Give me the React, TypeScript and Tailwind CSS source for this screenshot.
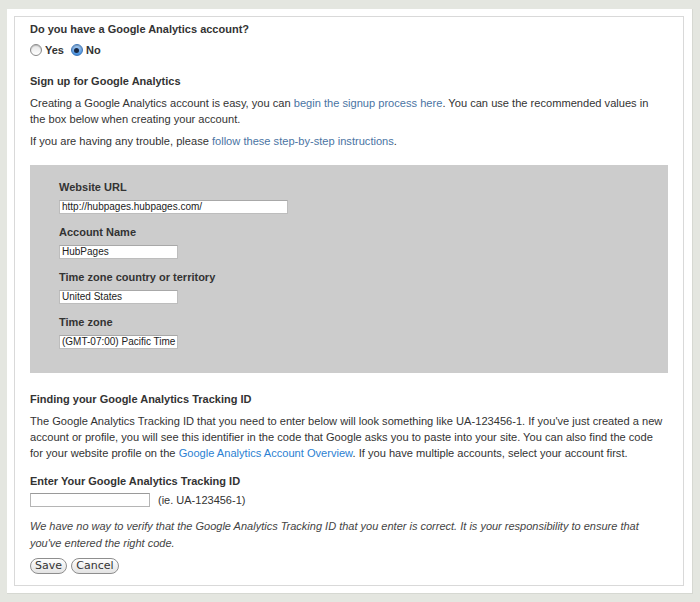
import React from 'react'

const sans = { fontFamily: '"Liberation Sans", Arial, Helvetica, sans-serif' }

function Radio({ checked }: { checked?: boolean }) {
  if (checked) {
    return (
      <span className="inline-flex items-center justify-center w-[12px] h-[12px] rounded-full border border-[#3d76b8] bg-gradient-to-b from-[#a9cdf3] to-[#3f8ee0] shadow-[inset_0_1px_1px_rgba(0,0,0,0.25)]">
        <span className="w-[5px] h-[5px] rounded-full bg-[#1a2a44]" />
      </span>
    )
  }
  return (
    <span className="inline-block w-[12px] h-[12px] rounded-full border border-[#8a8a8a] bg-gradient-to-b from-[#e6e6e6] to-white shadow-[inset_0_1px_1px_rgba(0,0,0,0.2)]" />
  )
}

function Field({ label, value, width, first }: { label: string; value: string; width: string; first?: boolean }) {
  return (
    <div className={first ? '' : 'mt-[10px]'}>
      <div className="font-bold leading-4">{label}</div>
      <div className={`mt-[5px] h-[14px] ${width} bg-white border border-[#bdbdbd] border-t-[#a8a8a8] text-[10px] leading-[12px] text-[#222] pl-[2px] overflow-hidden whitespace-nowrap`}>
        {value}
      </div>
    </div>
  )
}

function PillButton({ children, width }: { children: React.ReactNode; width: string }) {
  return (
    <button
      type="button"
      className={`h-[16px] ${width} rounded-full border border-[#8e8e8e] bg-gradient-to-b from-white to-[#e3e3e3] text-[11px] leading-[14px] text-[#333] flex items-center justify-center`}
      style={{ fontFamily: '"DejaVu Sans", Verdana, sans-serif' }}
    >
      {children}
    </button>
  )
}

export default function App() {
  return (
    <div className="bg-[#e4e6e0] h-[602px] w-[700px] pt-[9px] pl-[7px]" style={sans}>
      <div className="bg-white w-[686px] h-[585px] pt-[7px] pl-[7px] border-r border-b border-[#d6d8d2]">
        <div className="w-[670px] h-[570px] border border-[#d9d9d9] px-[15px] pt-[4px] text-[11px] text-[#333]">
          <div className="font-bold leading-4">Do you have a Google Analytics account?</div>
          <div className="mt-[5px] flex items-center h-4 font-bold">
            <Radio />
            <span className="ml-[3px]">Yes</span>
            <span className="ml-[7px] flex items-center">
              <Radio checked />
            </span>
            <span className="ml-[3px]">No</span>
          </div>

          <div className="mt-[15px] font-bold leading-4">Sign up for Google Analytics</div>
          <p className="mt-[6px] leading-4 text-[11.1px] w-[630px]">
            Creating a Google Analytics account is easy, you can{' '}
            <a className="text-[#4a74a3]">begin the signup process here</a>. You can use the recommended values in the box below when creating your account.
          </p>
          <p className="mt-[6px] leading-4 text-[11.1px]">
            If you are having any trouble, please <a className="text-[#4a74a3]">follow these step-by-step instructions</a>.
          </p>

          <div className="mt-[16px] bg-[#cccccc] w-[638px] h-[208px] pl-[29px] pt-[14px]">
            <Field first label="Website URL" value="http://hubpages.hubpages.com/" width="w-[229px]" />
            <Field label="Account Name" value="HubPages" width="w-[119px]" />
            <Field label="Time zone country or territory" value="United States" width="w-[119px]" />
            <Field label="Time zone" value="(GMT-07:00) Pacific Time" width="w-[119px]" />
          </div>

          <div className="mt-[18px] font-bold leading-4">Finding your Google Analytics Tracking ID</div>
          <p className="mt-[6px] leading-4 text-[11.1px]">
            The Google Analytics Tracking ID that you need to enter below will look something like UA-123456-1. If you've just created a new account or profile, you will see this identifier in the code that Google asks you to paste into your site. You can also find the code for your website profile on the{' '}
            <a className="text-[#2b7fd2]">Google Analytics Account Overview</a>. If you have multiple accounts, select your account first.
          </p>

          <div className="mt-[12px] font-bold leading-4">Enter Your Google Analytics Tracking ID</div>
          <div className="mt-[4px] flex items-center h-[14px]">
            <div className="h-[14px] w-[120px] bg-white border border-[#b5b5b5] border-t-[#9a9a9a]" />
            <span className="ml-[8px] leading-4">(ie. UA-123456-1)</span>
          </div>

          <p className="mt-[11px] italic leading-[17px] text-[#444]">
            We have no way to verify that the Google Analytics Tracking ID that you enter is correct. It is your responsibility to ensure that you've entered the right code.
          </p>

          <div className="mt-[6px] flex gap-[4px]">
            <PillButton width="w-[37px]">Save</PillButton>
            <PillButton width="w-[48px]">Cancel</PillButton>
          </div>
        </div>
      </div>
    </div>
  )
}
